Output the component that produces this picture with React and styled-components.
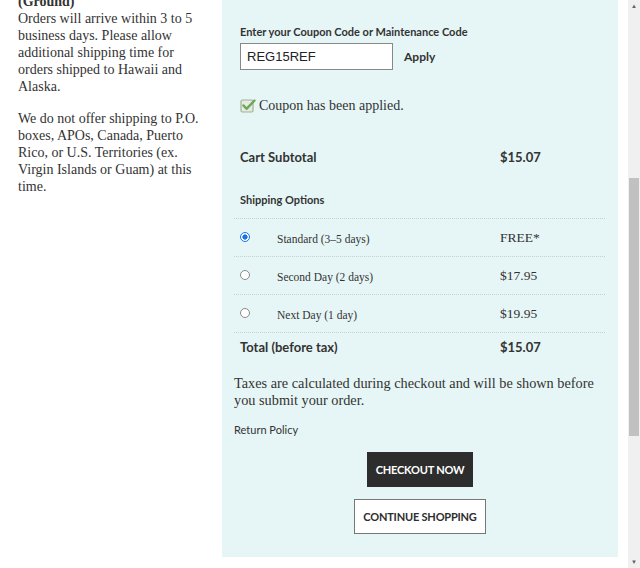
import styled, { createGlobalStyle } from 'styled-components'

const Global = createGlobalStyle`
  html, body { margin: 0; padding: 0; background: #fff; }
  body { height: 568px; overflow: hidden; }
  * { box-sizing: border-box; }
`

const options = [
  { label: 'Standard (3–5 days)', price: 'FREE*', checked: true },
  { label: 'Second Day (2 days)', price: '$17.95' },
  { label: 'Next Day (1 day)', price: '$19.95' },
]

function CheckIcon() {
  return (
    <svg width="16" height="16" viewBox="0 0 16 16">
      <rect x="1" y="2" width="12" height="12" rx="1.5" fill="#e4ebe0" stroke="#9db391" strokeWidth="1.2" />
      <path d="M3.5 7.5 L6.5 10.8 L14.5 2.5" fill="none" stroke="#6fa55a" strokeWidth="2.4" strokeLinecap="round" strokeLinejoin="round" />
    </svg>
  )
}

export default function App() {
  return (
    <Page>
      <Global />
      <Main>
        <Sidebar>
          <Para>
            <b>(Ground)</b><br />
            Orders will arrive within 3 to 5 business days. Please allow additional shipping time for orders shipped to Hawaii and Alaska.
          </Para>
          <Para>
            We do not offer shipping to P.O. boxes, APOs, Canada, Puerto Rico, or U.S. Territories (ex. Virgin Islands or Guam) at this time.
          </Para>
        </Sidebar>
        <Panel>
          <Coupon>
            <Label>Enter your Coupon Code or Maintenance Code</Label>
            <CouponRow>
              <Input defaultValue="REG15REF" />
              <Apply>Apply</Apply>
            </CouponRow>
            <Applied><CheckIcon />Coupon has been applied.</Applied>
            <SumRow>
              <span>Cart Subtotal</span>
              <span>$15.07</span>
            </SumRow>
            <Label>Shipping Options</Label>
          </Coupon>
          <Table>
            {options.map((o) => (
              <OptRow key={o.label}>
                <Radio $checked={o.checked} />
                <OptLabel>{o.label}</OptLabel>
                <Price>{o.price}</Price>
              </OptRow>
            ))}
            <TotalRow>
              <span>Total (before tax)</span>
              <span>$15.07</span>
            </TotalRow>
          </Table>
          <Note>Taxes are calculated during checkout and will be shown before you submit your order.</Note>
          <Link>Return Policy</Link>
          <Buttons>
            <Button $dark>CHECKOUT NOW</Button>
            <Button>CONTINUE SHOPPING</Button>
          </Buttons>
        </Panel>
      </Main>
      <Scrollbar>
        <Arrow>▲</Arrow>
        <Track $h={166} />
        <Thumb />
        <Track $h={120} />
        <Arrow>▼</Arrow>
      </Scrollbar>
    </Page>
  )
}

const Page = styled.div`
  display: flex;
  height: 568px;
  overflow: hidden;
`
const Main = styled.div`
  display: flex;
  align-items: flex-start;
  width: 628px;
`
const Sidebar = styled.div`
  width: 222px;
  padding: 0 18px;
  margin-top: -7px;
  font-family: "Liberation Serif", serif;
  font-size: 14px;
  line-height: 17px;
  color: #333;
`
const Para = styled.p`
  margin: 0 0 15px;
`
const Panel = styled.div`
  width: 396px;
  height: 557px;
  background: #e6f6f6;
  padding: 0 12px;
`
const Coupon = styled.div`
  padding: 25px 6px 0;
`
const Label = styled.div`
  font-family: Lato, sans-serif;
  font-weight: 700;
  font-size: 11px;
  color: #333;
`
const CouponRow = styled.div`
  display: flex;
  align-items: center;
  gap: 11px;
  margin-top: 5px;
`
const Input = styled.input`
  width: 153px;
  height: 27px;
  border: 1px solid #888;
  background: #fff;
  padding: 0 6px;
  font-family: "Liberation Sans", sans-serif;
  font-size: 13px;
  color: #222;
  outline: none;
`
const Apply = styled.span`
  font-family: Lato, sans-serif;
  font-weight: 700;
  font-size: 12px;
  color: #333;
`
const Applied = styled.div`
  display: flex;
  align-items: center;
  gap: 3px;
  margin-top: 28px;
  font-family: "Liberation Serif", serif;
  font-size: 14px;
  color: #333;
`
const SumRow = styled.div`
  display: grid;
  grid-template-columns: 260px 1fr;
  margin: 35px 0 28px;
  font-family: Lato, sans-serif;
  font-weight: 700;
  font-size: 13px;
  color: #333;
`
const Table = styled.div`
  margin-top: 12px;
  width: 371px;
`
const OptRow = styled.div`
  display: grid;
  grid-template-columns: 37px 223px 1fr;
  align-items: center;
  height: 38px;
  border-top: 1px dotted #c4d2d2;
  padding-left: 6px;
`
const Radio = styled.span`
  width: 10px;
  height: 10px;
  border-radius: 50%;
  border: 1px solid ${(p) => (p.$checked ? '#1a73e8' : '#8a8a8a')};
  background: ${(p) => (p.$checked ? 'radial-gradient(circle, #1a73e8 0 2.4px, #fff 2.8px)' : '#fff')};
  margin-top: -1px;
`
const OptLabel = styled.span`
  font-family: "Liberation Serif", serif;
  font-size: 11.5px;
  color: #333;
  padding-top: 2px;
`
const Price = styled.span`
  font-family: "Liberation Serif", serif;
  font-size: 13.5px;
  color: #333;
`
const TotalRow = styled.div`
  display: grid;
  grid-template-columns: 260px 1fr;
  align-items: center;
  height: 28px;
  border-top: 1px dotted #c4d2d2;
  padding-left: 6px;
  font-family: Lato, sans-serif;
  font-weight: 700;
  font-size: 13px;
  color: #333;
`
const Note = styled.p`
  margin: 15px 0 0;
  font-family: "Liberation Serif", serif;
  font-size: 14.3px;
  line-height: 17px;
  color: #333;
`
const Link = styled.div`
  margin-top: 14px;
  font-family: Lato, sans-serif;
  font-size: 11px;
  color: #333;
`
const Buttons = styled.div`
  display: flex;
  flex-direction: column;
  align-items: center;
  gap: 12px;
  margin-top: 16px;
`
const Button = styled.button`
  height: 35px;
  padding: 0 8px;
  font-family: Lato, sans-serif;
  font-weight: 700;
  font-size: 11px;
  letter-spacing: -0.2px;
  color: ${(p) => (p.$dark ? '#fff' : '#2d2d2d')};
  background: ${(p) => (p.$dark ? '#2d2d2d' : '#fff')};
  border: 1px solid ${(p) => (p.$dark ? '#2d2d2d' : '#777')};
  border-radius: 0;
`
const Scrollbar = styled.div`
  width: 12px;
  display: flex;
  flex-direction: column;
  background: #f0f0f0;
`
const Arrow = styled.div`
  height: 12px;
  font-size: 6px;
  line-height: 12px;
  text-align: center;
  color: #606060;
`
const Track = styled.div`
  height: ${(p) => p.$h}px;
`
const Thumb = styled.div`
  flex: 1;
  margin: 0 1px;
  background: #c1c1c1;
`
